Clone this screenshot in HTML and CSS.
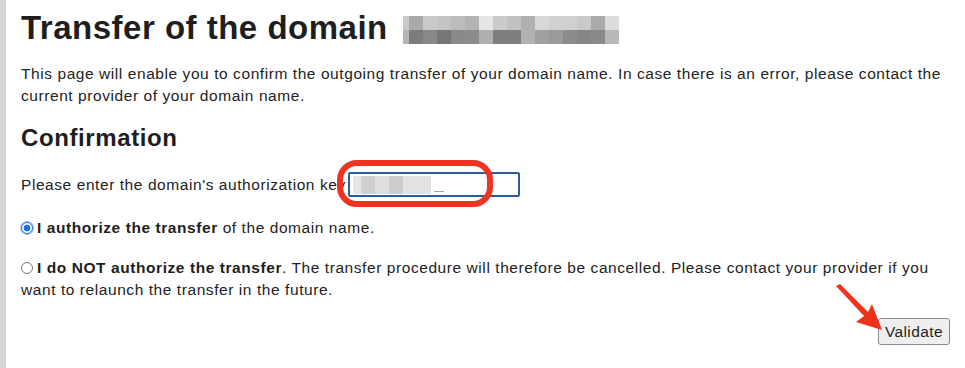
FILE: index.html
```html
<!DOCTYPE html>
<html>
<head>
<meta charset="utf-8">
<link rel="stylesheet" href="styles.css">
</head>
<body>
<div class="stripe"></div>
<main class="content">
  <h1 class="title">Transfer of the domain <span class="blur-domain"><i class="b1"></i><i class="b2"></i><i class="b3"></i><i class="b4"></i><i class="b5"></i><i class="b6"></i><i class="b7"></i><i class="b8"></i><i class="b9"></i><i class="b10"></i><i class="b11"></i><i class="b12"></i><i class="b13"></i><i class="b14"></i><i class="b15"></i><i class="b16"></i></span></h1>
  <p class="intro">This page will enable you to confirm the outgoing transfer of your domain name. In case there is an error, please contact the current provider of your domain name.</p>
  <h2 class="subtitle">Confirmation</h2>
  <form class="form">
    <div class="key-row">
      <label class="key-label" for="key">Please enter the domain's authorization key</label>
      <span class="key-wrap">
        <span class="key-input" id="key"><span class="blur-key"><i class="k1"></i><i class="k2"></i><i class="k3"></i><i class="k4"></i><i class="k5"></i></span><span class="key-caret"></span></span>
        <span class="ring"></span>
      </span>
    </div>
    <p class="option"><span class="radio checked"></span><b>I authorize the transfer</b> of the domain name.</p>
    <p class="option second"><span class="radio"></span><b>I do NOT authorize the transfer</b>. The transfer procedure will therefore be cancelled. Please contact your provider if you want to relaunch the transfer in the future.</p>
    <div class="actions">
      <span class="btn-wrap">
        <svg class="arrow" width="50" height="50" viewBox="0 0 50 50">
          <path d="M2 2 L6 0 L34 28 L38 20 L48 46 L22 38 L30 32 Z" fill="#f0321a"/>
        </svg>
        <button type="button" class="validate">Validate</button>
      </span>
    </div>
  </form>
</main>
</body>
</html>
```
FILE: styles.css
```css
html, body {
  margin: 0;
  padding: 0;
  background: #ffffff;
}
body {
  display: flex;
  min-height: 368px;
  font-family: "Liberation Sans", Arial, sans-serif;
  color: #222222;
}
.stripe {
  width: 6px;
  flex: none;
  background: #d7d7d3;
}
.content {
  flex: 1;
  padding: 0 22px 0 15px;
}
.title {
  margin: 10px 0 0;
  font-size: 33px;
  line-height: 36px;
  font-weight: bold;
  color: #1e1e1e;
  letter-spacing: 0.5px;
}
.blur-domain {
  display: inline-grid;
  grid-template-columns: 6px repeat(15, 14px);
  grid-template-rows: 14px 14px;
  grid-auto-flow: column;
  vertical-align: -5px;
  margin-left: 6px;
}
.blur-domain i { display: block; }
.b1 { background: linear-gradient(#c9c9c9 50%, #b5b5b5 50%); grid-row: span 2; }
.b2 { background: linear-gradient(#aaaaaa 50%, #7c7c7c 50%); grid-row: span 2; }
.b3 { background: linear-gradient(#c9c9c9 50%, #888888 50%); grid-row: span 2; }
.b4 { background: linear-gradient(#c4c4c4 50%, #767676 50%); grid-row: span 2; }
.b5 { background: linear-gradient(#bcbcbc 50%, #8a8a8a 50%); grid-row: span 2; }
.b6 { background: linear-gradient(#b3b3b3 50%, #8c8c8c 50%); grid-row: span 2; }
.b7 { background: linear-gradient(#e6e6e6 50%, #b0b0b0 50%); grid-row: span 2; }
.b8 { background: linear-gradient(#cbcbcb 50%, #7e7e7e 50%); grid-row: span 2; }
.b9 { background: linear-gradient(#c2c2c2 50%, #7e7e7e 50%); grid-row: span 2; }
.b10 { background: linear-gradient(#b0b0b0 50%, #b2b2b2 50%); grid-row: span 2; }
.b11 { background: linear-gradient(#d7d7d7 50%, #a0a0a0 50%); grid-row: span 2; }
.b12 { background: linear-gradient(#d0d0d0 50%, #9a9a9a 50%); grid-row: span 2; }
.b13 { background: linear-gradient(#d0d0d0 50%, #8c8c8c 50%); grid-row: span 2; }
.b14 { background: linear-gradient(#c9c9c9 50%, #858585 50%); grid-row: span 2; }
.b15 { background: linear-gradient(#aaaaaa 50%, #8a8a8a 50%); grid-row: span 2; }
.b16 { background: linear-gradient(#dcdcdc 50%, #b8b8b8 50%); grid-row: span 2; }
.intro {
  margin: 17px 0 0;
  font-size: 15.5px;
  line-height: 22px;
  letter-spacing: 0.57px;
}
.subtitle {
  margin: 17px 0 0;
  font-size: 24px;
  line-height: 28px;
  font-weight: bold;
  color: #1e1e1e;
  letter-spacing: 0.6px;
}
.form {
  margin: 0;
  font-size: 15.5px;
  letter-spacing: 0.57px;
}
.key-row {
  margin-top: 20px;
  display: flex;
  align-items: center;
}
.key-label {
  line-height: 22px;
}
.key-wrap {
  position: relative;
  margin-left: 2px;
}
.key-input {
  display: flex;
  align-items: center;
  box-sizing: border-box;
  width: 172px;
  height: 25px;
  border: 2px solid #2c5d98;
  border-radius: 2px;
  background: #fff;
}
.blur-key {
  display: grid;
  grid-template-columns: 8px 14px 14px 14px 28px;
  height: 18px;
  margin-left: 3px;
}
.blur-key i { display: block; }
.k1 { background: #e6e6e6; }
.k2 { background: #d0d0d0; }
.k3 { background: #dedede; }
.k4 { background: #cdcdcd; }
.k5 { background: #e2e2e2; }
.key-caret {
  width: 10px;
  height: 1px;
  background: #9aa;
  align-self: flex-end;
  margin: 0 0 3px 3px;
}
.ring {
  position: absolute;
  left: -11px;
  top: -12px;
  width: 144px;
  height: 35px;
  border: 6px solid #ee3322;
  border-radius: 20px;
}
.option {
  margin: 20px 0 0;
  line-height: 22px;
}
.option.second {
  margin-top: 18px;
}
.radio {
  display: inline-block;
  box-sizing: border-box;
  width: 12px;
  height: 12px;
  border-radius: 50%;
  border: 1px solid #777;
  margin: 0 4px 0 0;
  vertical-align: -1px;
  background: #fff;
}
.radio.checked {
  border: 1px solid #1c6fd8;
  background: radial-gradient(circle, #1a73e8 0 3.2px, #fff 3.7px);
  box-shadow: 0 0 0 1px #9bc1f0;
}
.option b {
  color: #1e1e1e;
}
.actions {
  display: flex;
  justify-content: flex-end;
  margin-top: 17px;
}
.btn-wrap {
  position: relative;
  margin-right: -7px;
}
.arrow {
  position: absolute;
  left: -44px;
  top: -34px;
}
.validate {
  font-family: "Liberation Sans", Arial, sans-serif;
  font-size: 15.5px;
  letter-spacing: 0.4px;
  color: #1e1e1e;
  background: #efefef;
  border: 1px solid #8a8a8a;
  border-radius: 3px;
  height: 27px;
  padding: 0 6px;
}
```
